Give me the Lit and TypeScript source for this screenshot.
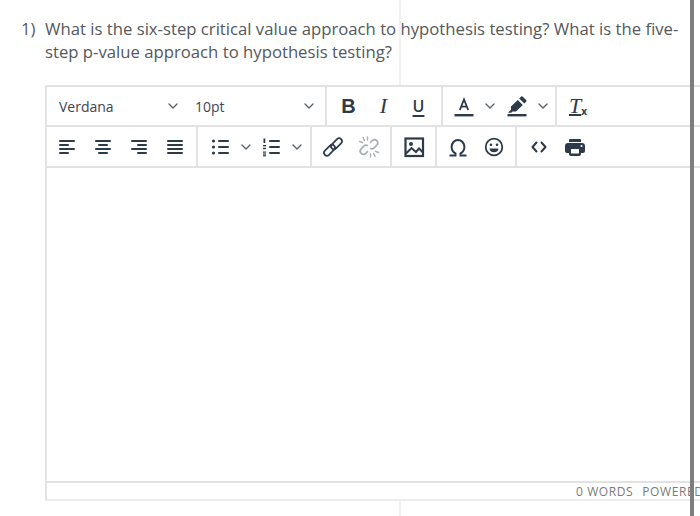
import { LitElement, html, css, svg } from "lit";
import { customElement } from "lit/decorators.js";

const ic = (body: unknown, cls = "") => html`<svg class="ic ${cls}" viewBox="0 0 24 24" width="24" height="24">${body}</svg>`;
const bars = (rows: [number, number][]) =>
  ic(rows.map(([x, w], i) => svg`<rect x=${x} y=${5 + i * 4} width=${w} height="2" rx="1" fill="currentColor"></rect>`));

const alignLeft = bars([[4, 16], [4, 10], [4, 16], [4, 10]]);
const alignCenter = bars([[4, 16], [7, 10], [4, 16], [7, 10]]);
const alignRight = bars([[4, 16], [10, 10], [4, 16], [10, 10]]);
const alignFull = bars([[4, 16], [4, 16], [4, 16], [4, 16]]);

const bullets = ic(svg`
  <g fill="currentColor">
    <circle cx="5.5" cy="6" r="1.6"></circle><circle cx="5.5" cy="12" r="1.6"></circle><circle cx="5.5" cy="18" r="1.6"></circle>
    <rect x="10" y="5" width="11" height="2" rx="1"></rect><rect x="10" y="11" width="11" height="2" rx="1"></rect><rect x="10" y="17" width="11" height="2" rx="1"></rect>
  </g>`);
const numbers = ic(svg`
  <g fill="currentColor">
    <rect x="4.5" y="3.5" width="1.8" height="4.5"></rect>
    <rect x="4" y="10" width="3" height="1.4"></rect><rect x="4" y="12.8" width="3" height="1.4"></rect>
    <rect x="4" y="16.5" width="3" height="1.2"></rect><rect x="4" y="18.4" width="3" height="1.2"></rect><rect x="4" y="20.2" width="3" height="1.2"></rect>
    <rect x="10" y="5" width="11" height="2" rx="1"></rect><rect x="10" y="11" width="11" height="2" rx="1"></rect><rect x="10" y="17" width="11" height="2" rx="1"></rect>
  </g>`);
const link = ic(svg`
  <g fill="none" stroke="currentColor" stroke-width="1.7">
    <rect x="2" y="12.3" width="13" height="5.8" rx="2.9" transform="rotate(-45 8.5 15.2)"></rect>
    <rect x="9" y="5.9" width="13" height="5.8" rx="2.9" transform="rotate(-45 15.5 8.8)"></rect>
  </g>`);
const unlink = ic(svg`
  <g fill="none" stroke="currentColor" stroke-width="1.7" stroke-linecap="round">
    <path d="M13.5 7.5l1.7-1.8a3.2 3.2 0 0 1 4.6 0 3.2 3.2 0 0 1 0 4.5l-2.7 2.6a3.2 3.2 0 0 1-3.5.7"></path>
    <path d="M10.5 16.5l-1.7 1.8a3.2 3.2 0 0 1-4.6 0 3.2 3.2 0 0 1 0-4.5l2.7-2.6a3.2 3.2 0 0 1 3.5-.7"></path>
  </g>
  <path d="M6 2.5l1.4 3M2.5 6.5l3 1.2M10.5 2v3M18 21.5l-1.4-3M21.5 17.5l-3-1.2M13.5 22v-3" fill="none" stroke="currentColor" stroke-width="1.4" stroke-linecap="round"></path>`, "dim");
const image = ic(svg`
  <rect x="3.5" y="3.5" width="17.5" height="17.5" fill="none" stroke="currentColor" stroke-width="2.2"></rect>
  <circle cx="9" cy="9" r="2" fill="currentColor"></circle>
  <path d="M4 18.5l5.5-5.5 4.5 4 3-3.5 3.5 3.5" fill="none" stroke="currentColor" stroke-width="2"></path>`);
const omega = ic(svg`
  <path d="M3.5 20.5h6v-2a7.2 7.2 0 0 1-3.9-6.4C5.6 8 8.4 5 12 5s6.4 3 6.4 7.1a7.2 7.2 0 0 1-3.9 6.4v2h6" fill="none" stroke="currentColor" stroke-width="2"></path>`);
const smile = ic(svg`
  <circle cx="12" cy="12" r="8.3" fill="none" stroke="currentColor" stroke-width="1.8"></circle>
  <circle cx="9" cy="9.8" r="1.3" fill="currentColor"></circle><circle cx="15" cy="9.8" r="1.3" fill="currentColor"></circle>
  <path d="M7.6 13.4h8.8a4.4 3.8 0 0 1-8.8 0z" fill="currentColor"></path>`);
const code = ic(svg`<path d="M9.5 7.5L5.5 12l4 4.5M14.5 7.5l4 4.5-4 4.5" fill="none" stroke="currentColor" stroke-width="2" stroke-linecap="round" stroke-linejoin="round"></path>`);
const print = ic(svg`
  <path fill-rule="evenodd" fill="currentColor" d="M7 4h10a1 1 0 0 1 1 1v2H6V5a1 1 0 0 1 1-1zM5 8h14a3 3 0 0 1 3 3v5a2 2 0 0 1-2 2h-2v1a2 2 0 0 1-2 2H8a2 2 0 0 1-2-2v-1H4a2 2 0 0 1-2-2v-5a3 3 0 0 1 3-3zm3 6v4.5h8V14z"></path>
  <circle cx="18.5" cy="11" r="1" fill="#fff"></circle>`);
const pen = ic(svg`
  <path d="M17.5 2.5l3.8 3.8a1 1 0 0 1 0 1.3l-2 2-5.1-5.1 2-2a1 1 0 0 1 1.3 0zM12.8 6l5 5-6.8 6.5H7.5l-1.2 1.2L3 18.7l3-3v-3.2z" fill="currentColor"></path>
  <rect x="2.5" y="20" width="19" height="2.4" fill="currentColor"></rect>`);
const colorA = ic(svg`
  <path d="M7.8 16L12 5.5 16.2 16M9.2 12.6h5.6" fill="none" stroke="currentColor" stroke-width="1.8"></path>
  <rect x="2.5" y="20" width="19" height="2.4" fill="currentColor"></rect>`);
const chev = html`<svg class="chev" viewBox="0 0 10 6" width="10" height="6"><path d="M1 1l4 4 4-4" fill="none" stroke="currentColor" stroke-width="1.4" stroke-linecap="round" stroke-linejoin="round"></path></svg>`;

@customElement("app-root")
export class AppRoot extends LitElement {
  static styles = css`
    :host {
      display: block;
      position: relative;
      isolation: isolate;
      width: 700px;
      height: 516px;
      overflow: hidden;
      background: #fff;
      font-family: "Open Sans", sans-serif;
      color: #2c3a4a;
    }
    .fold { position: absolute; left: 399px; top: 0; width: 2px; height: 516px; background: #f1f1f1; z-index: -1; }
    .edge { position: absolute; left: 690px; top: 0; width: 4px; height: 516px; background: #7e7e7e; }
    .question {
      display: grid;
      grid-template-columns: 24px 640px;
      padding: 17px 0 0 21px;
      height: 85px;
      box-sizing: border-box;
      font-size: 16.72px;
      line-height: 23px;
      color: #54585c;
    }
    .editor {
      margin-left: 45px;
      width: 760px;
      height: 416px;
      box-sizing: border-box;
      border: 2px solid #e2e2e2;
      border-right: 0;
      border-bottom-color: #ececec;
      background: #fff;
      display: flex;
      flex-direction: column;
    }
    .row { display: flex; height: 38px; flex: none; border-bottom: 2px solid #e2e2e2; }
    .row + .row { height: 39px; }
    .group { display: flex; align-items: center; border-right: 2px solid #e2e2e2; box-sizing: border-box; flex: none; }
    .g-font { width: 280px; padding-left: 2px; }
    .g-fmt { width: 116px; padding-left: 4px; }
    .g-col { width: 114px; padding-left: 3px; }
    .g-clr { padding-left: 3px; border-right: 0; }
    .g-al { width: 151px; padding-left: 2px; }
    .g-ls { width: 114px; padding-left: 4px; }
    .g-ln { width: 80px; padding-left: 3px; }
    .g-im { width: 45px; padding-left: 4px; }
    .g-ch { width: 80px; padding-left: 3px; }
    .g-tl { padding-left: 4px; border-right: 0; }
    .sel {
      display: flex; align-items: center; justify-content: space-between;
      width: 136px; box-sizing: border-box; padding: 0 7px 0 10px;
      font-size: 14px; color: #3a4654;
    }
    .btn { width: 36px; height: 36px; display: flex; align-items: center; justify-content: center; flex: none; }
    .fmt { width: 35px; }
    .arrow { width: 15px; height: 36px; display: flex; align-items: center; justify-content: center; flex: none; color: #5b6570; }
    .chev { display: block; color: #5b6570; }
    .split { margin-right: 2px; display: flex; }
    .ic { display: block; color: #2c3a4a; }
    .dim { color: #a9afb5; }
    .b { font-weight: 700; font-size: 20px; font-family: "Liberation Sans", sans-serif; }
    .i { font-family: "Liberation Serif", serif; font-style: italic; font-size: 22px; }
    .u { font-size: 16px; text-decoration: underline; text-underline-offset: 3px; text-decoration-thickness: 2px; font-weight: 600; }
    .tx { font-family: "Liberation Serif", serif; font-style: italic; font-size: 22px; text-decoration: underline; text-decoration-thickness: 1.5px; text-underline-offset: 1px; }
    .tx sub { font-family: "Open Sans", sans-serif; font-style: normal; font-size: 10px; font-weight: 700; vertical-align: -2px; display: inline-block; text-decoration: none; }
    .body { flex: 1; }
    .status {
      flex: none; height: 18px; box-sizing: border-box;
      border-top: 2px solid #e2e2e2;
      padding-left: 529px;
      display: flex; align-items: center; gap: 9px;
      font-size: 12px; letter-spacing: 0.6px; color: #7a7a7a; white-space: nowrap;
    }
  `;

  render() {
    return html`
      <div class="fold"></div>
      <div class="question">
        <span>1)</span>
        <span>What is the six-step critical value approach to hypothesis testing? What is the five-step p-value approach to hypothesis testing?</span>
      </div>
      <div class="editor">
        <div class="row">
          <div class="group g-font">
            <div class="sel"><span>Verdana</span>${chev}</div>
            <div class="sel"><span>10pt</span>${chev}</div>
          </div>
          <div class="group g-fmt">
            <div class="btn fmt b">B</div>
            <div class="btn fmt i">I</div>
            <div class="btn fmt u">U</div>
          </div>
          <div class="group g-col">
            <div class="split"><div class="btn">${colorA}</div><div class="arrow">${chev}</div></div>
            <div class="split"><div class="btn">${pen}</div><div class="arrow">${chev}</div></div>
          </div>
          <div class="group g-clr">
            <div class="btn tx"><span>T<sub>x</sub></span></div>
          </div>
        </div>
        <div class="row">
          <div class="group g-al">
            <div class="btn">${alignLeft}</div><div class="btn">${alignCenter}</div><div class="btn">${alignRight}</div><div class="btn">${alignFull}</div>
          </div>
          <div class="group g-ls">
            <div class="btn">${bullets}</div><div class="arrow">${chev}</div>
            <div class="btn">${numbers}</div><div class="arrow">${chev}</div>
          </div>
          <div class="group g-ln">
            <div class="btn">${link}</div><div class="btn">${unlink}</div>
          </div>
          <div class="group g-im">
            <div class="btn">${image}</div>
          </div>
          <div class="group g-ch">
            <div class="btn">${omega}</div><div class="btn">${smile}</div>
          </div>
          <div class="group g-tl">
            <div class="btn">${code}</div><div class="btn">${print}</div>
          </div>
        </div>
        <div class="body"></div>
        <div class="status"><span>0 WORDS</span><span>POWERED BY TINY</span></div>
      </div>
      <div class="edge"></div>
    `;
  }
}
